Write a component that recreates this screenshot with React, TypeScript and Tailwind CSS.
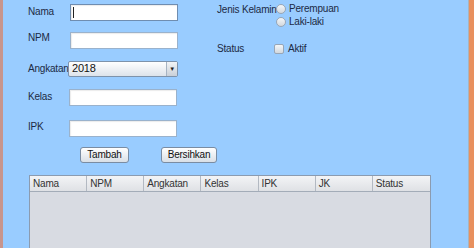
import React from "react";

const columns = ["Nama", "NPM", "Angkatan", "Kelas", "IPK", "JK", "Status"];

function TextField({ focused = false }: { focused?: boolean }) {
  return (
    <div
      className={`relative h-[17px] w-[108px] shrink-0 bg-white border ${
        focused ? "border-[#6f8db0]" : "border-[#9ab2cc]"
      } shadow-[inset_1px_1px_1px_rgba(0,0,0,0.08)]`}
    >
      {focused && <div className="absolute left-[2px] top-[2px] h-[11px] w-px bg-[#222]" />}
    </div>
  );
}

function Radio({ label }: { label: string }) {
  return (
    <div className="flex items-center gap-[3px] whitespace-nowrap">
      <div className="h-[10px] w-[10px] shrink-0 rounded-full border border-[#98a6b6] bg-gradient-to-b from-[#f4f6f8] to-[#d2d8de]" />
      <span>{label}</span>
    </div>
  );
}

export default function App() {
  return (
    <div
      className="flex h-[248px] w-[474px] overflow-hidden text-[10px] leading-none tracking-[-0.2px] text-[#1c2a44]"
      style={{ fontFamily: '"Liberation Sans", Arial, sans-serif' }}
    >
      <div className="w-[3px] shrink-0 bg-[#c8958d]" />
      <div className="flex flex-1 flex-col bg-[#99ccff]">
        {/* Form area */}
        <div className="flex">
          <div className="flex w-[175px] shrink-0 flex-col pl-[25px] pt-[4px]">
            <div className="flex h-[17px] items-center">
              <span className="w-[42px] shrink-0 -translate-y-[1px] whitespace-nowrap">Nama</span>
              <TextField focused />
            </div>
            <div className="mt-[11px] flex h-[17px] items-center">
              <span className="w-[42px] shrink-0 -translate-y-[3px] whitespace-nowrap">NPM</span>
              <TextField />
            </div>
            <div className="mt-[11px] flex h-[17px] items-center">
              <span className="w-[40px] shrink-0 whitespace-nowrap">Angkatan</span>
              <div className="flex h-[16px] w-[110px] shrink-0 items-stretch rounded-[2px] border border-[#7e93ab] bg-gradient-to-b from-white to-[#dde3ea]">
                <span className="flex flex-1 items-center pl-[3px] text-[11px] text-[#111]">2018</span>
                <div className="flex w-[11px] items-center justify-center border-l border-[#a6b3c2] bg-gradient-to-b from-[#f2f4f6] to-[#c9d0d8]">
                  <span className="text-[6px] text-[#222]">▼</span>
                </div>
              </div>
            </div>
            <div className="mt-[12px] flex h-[17px] items-center">
              <span className="w-[41px] shrink-0 -translate-y-[1px] whitespace-nowrap">Kelas</span>
              <TextField />
            </div>
            <div className="mt-[14px] flex h-[17px] items-center">
              <span className="w-[41px] shrink-0 -translate-y-[2px] whitespace-nowrap">IPK</span>
              <TextField />
            </div>
          </div>

          <div className="ml-[39px] flex flex-col pt-[4px]">
            <div className="flex">
              <span className="w-[59px] shrink-0 whitespace-nowrap pt-[1px]">Jenis Kelamin</span>
              <div className="flex flex-col gap-[3px]">
                <Radio label="Perempuan" />
                <Radio label="Laki-laki" />
              </div>
            </div>
            <div className="mt-[17px] flex items-center">
              <span className="w-[57px] shrink-0 whitespace-nowrap">Status</span>
              <div className="flex items-center gap-[4px]">
                <div className="h-[10px] w-[10px] rounded-[2px] border border-[#98a6b6] bg-gradient-to-b from-[#f4f6f8] to-[#d2d8de]" />
                <span>Aktif</span>
              </div>
            </div>
          </div>
        </div>

        {/* Buttons */}
        <div className="mt-[10px] flex pl-[77px]">
          <button className="flex h-[16px] w-[49px] items-center justify-center rounded-[3px] border border-[#7a8ca2] bg-gradient-to-b from-white to-[#d9dfe6] text-[10px] text-[#111]">
            Tambah
          </button>
          <button className="ml-[32px] flex h-[16px] w-[56px] items-center justify-center rounded-[3px] border border-[#7a8ca2] bg-gradient-to-b from-white to-[#d9dfe6] text-[10px] text-[#111]">
            Bersihkan
          </button>
        </div>

        {/* Table */}
        <div className="ml-[26px] mt-[12px] flex w-[402px] flex-1 flex-col border-x border-t border-[#8b9bb0] bg-[#d8dbe2]">
          <div className="grid h-[16px] grid-cols-7 border-b border-[#a3acb8] bg-gradient-to-b from-[#f3f4f6] to-[#dfe1e5] text-[#333]">
            {columns.map((c, i) => (
              <div
                key={c}
                className={`flex items-center pl-[3px] ${i < columns.length - 1 ? "border-r border-[#b3b9c2]" : ""}`}
              >
                {c}
              </div>
            ))}
          </div>
          <div className="flex-1" />
        </div>
      </div>
      <div className="w-px shrink-0 bg-[#a9b4bd]" />
      <div className="w-[5px] shrink-0 bg-[#e8905e]" />
    </div>
  );
}
